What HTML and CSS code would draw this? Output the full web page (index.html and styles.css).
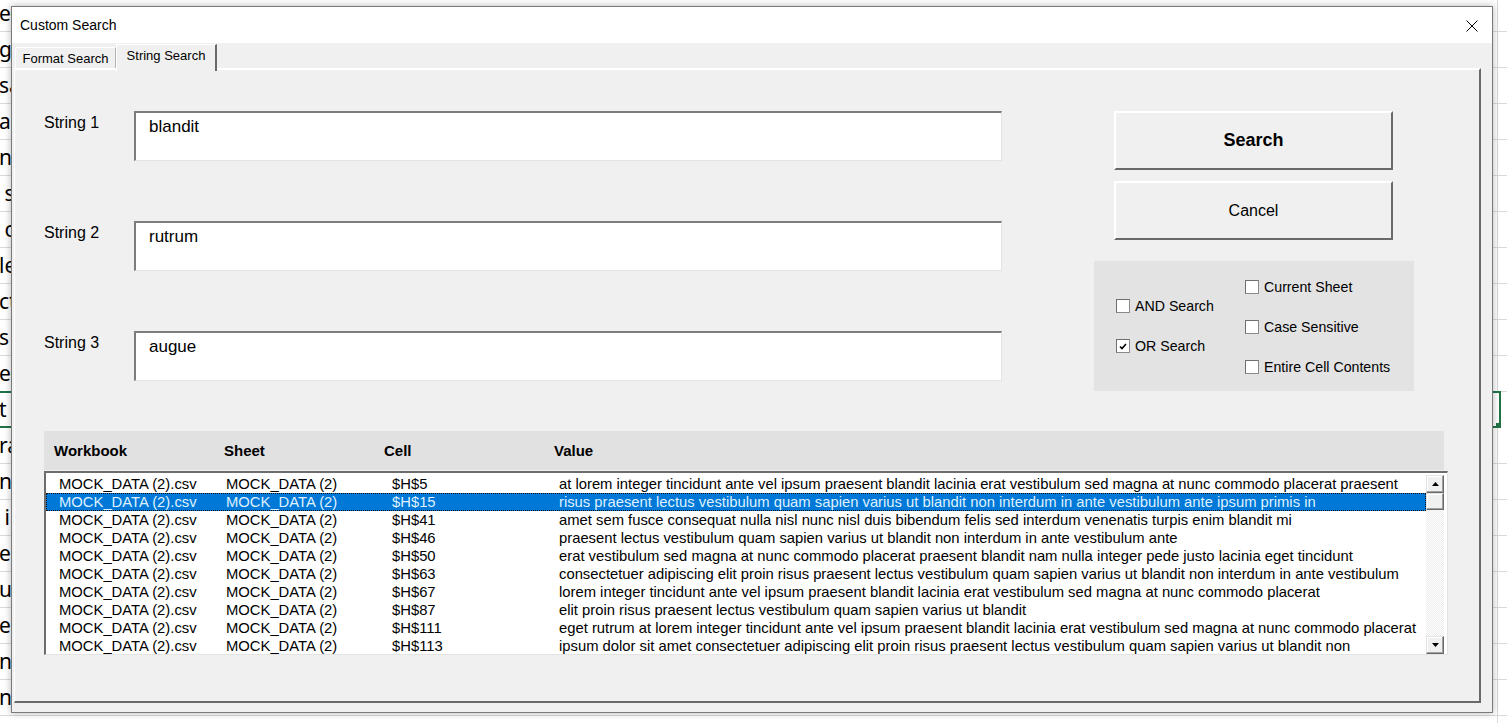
FILE: index.html
```html
<!DOCTYPE html>
<html lang="en">
<head>
    <meta charset="UTF-8">
    <title>Custom Search</title>
    <link rel="stylesheet" href="styles.css">
</head>
<body>
    <div class="sheet">
        <div class="row"><div class="cell"><span>e</span></div></div>
        <div class="row"><div class="cell"><span>ge</span></div></div>
        <div class="row"><div class="cell"><span>sa</span></div></div>
        <div class="row"><div class="cell"><span>a</span></div></div>
        <div class="row"><div class="cell"><span>nu</span></div></div>
        <div class="row"><div class="cell"><span>&nbsp;s</span></div></div>
        <div class="row"><div class="cell"><span>&nbsp;o</span></div></div>
        <div class="row"><div class="cell"><span>le</span></div></div>
        <div class="row"><div class="cell"><span>ct</span></div></div>
        <div class="row"><div class="cell"><span>s</span></div></div>
        <div class="row"><div class="cell"><span>er</span></div></div>
        <div class="row active"><div class="cell"><span>t</span></div></div>
        <div class="row"><div class="cell"><span>ra</span></div></div>
        <div class="row"><div class="cell"><span>n</span></div></div>
        <div class="row"><div class="cell"><span>&nbsp;i</span></div></div>
        <div class="row"><div class="cell"><span>e</span></div></div>
        <div class="row"><div class="cell"><span>u</span></div></div>
        <div class="row"><div class="cell"><span>e</span></div></div>
        <div class="row"><div class="cell"><span>n</span></div></div>
        <div class="row"><div class="cell"><span>n</span></div></div>
        <div class="row"><div class="cell"><span></span></div></div>
    </div>

    <div class="dialog">
        <div class="titlebar">
            <span class="title">Custom Search</span>
            <svg class="close" width="12" height="12" viewBox="0 0 12 12">
                <path d="M0.5 0.5 L11.5 11.5 M11.5 0.5 L0.5 11.5" stroke="#000" stroke-width="1"/>
            </svg>
        </div>

        <div class="tabs">
            <div class="tab">Format Search</div>
            <div class="tab on">String Search</div>
        </div>

        <div class="panel">
            <div class="top">
                <div class="strings">
                    <div class="field"><label>String 1</label><div class="textbox">blandit</div></div>
                    <div class="field"><label>String 2</label><div class="textbox">rutrum</div></div>
                    <div class="field"><label>String 3</label><div class="textbox">augue</div></div>
                </div>

                <div class="side">
                    <button class="btn main">Search</button>
                    <button class="btn">Cancel</button>
                    <div class="options">
                        <div class="optcol first">
                            <div class="check"><span class="box"></span>AND Search</div>
                            <div class="check"><span class="box"><svg width="8" height="7" viewBox="0 0 8 7"><path d="M1 3.5 L3 5.5 L7 1" fill="none" stroke="#000" stroke-width="1.6"/></svg></span>OR Search</div>
                        </div>
                        <div class="optcol second">
                            <div class="check"><span class="box"></span>Current Sheet</div>
                            <div class="check"><span class="box"></span>Case Sensitive</div>
                            <div class="check"><span class="box"></span>Entire Cell Contents</div>
                        </div>
                    </div>
                </div>
            </div>

            <div class="results">
                <div class="head">
                    <span class="c1">Workbook</span><span class="c2">Sheet</span><span class="c3">Cell</span><span class="c4">Value</span>
                </div>
                <div class="listbox">
                    <div class="items">
                        <div class="item"><span class="c1">MOCK_DATA (2).csv</span><span class="c2">MOCK_DATA (2)</span><span class="c3">$H$5</span><span class="c4">at lorem integer tincidunt ante vel ipsum praesent blandit lacinia erat vestibulum sed magna at nunc commodo placerat praesent</span></div>
                        <div class="item sel"><span class="c1">MOCK_DATA (2).csv</span><span class="c2">MOCK_DATA (2)</span><span class="c3">$H$15</span><span class="c4">risus praesent lectus vestibulum quam sapien varius ut blandit non interdum in ante vestibulum ante ipsum primis in</span></div>
                        <div class="item"><span class="c1">MOCK_DATA (2).csv</span><span class="c2">MOCK_DATA (2)</span><span class="c3">$H$41</span><span class="c4">amet sem fusce consequat nulla nisl nunc nisl duis bibendum felis sed interdum venenatis turpis enim blandit mi</span></div>
                        <div class="item"><span class="c1">MOCK_DATA (2).csv</span><span class="c2">MOCK_DATA (2)</span><span class="c3">$H$46</span><span class="c4">praesent lectus vestibulum quam sapien varius ut blandit non interdum in ante vestibulum ante</span></div>
                        <div class="item"><span class="c1">MOCK_DATA (2).csv</span><span class="c2">MOCK_DATA (2)</span><span class="c3">$H$50</span><span class="c4">erat vestibulum sed magna at nunc commodo placerat praesent blandit nam nulla integer pede justo lacinia eget tincidunt</span></div>
                        <div class="item"><span class="c1">MOCK_DATA (2).csv</span><span class="c2">MOCK_DATA (2)</span><span class="c3">$H$63</span><span class="c4">consectetuer adipiscing elit proin risus praesent lectus vestibulum quam sapien varius ut blandit non interdum in ante vestibulum</span></div>
                        <div class="item"><span class="c1">MOCK_DATA (2).csv</span><span class="c2">MOCK_DATA (2)</span><span class="c3">$H$67</span><span class="c4">lorem integer tincidunt ante vel ipsum praesent blandit lacinia erat vestibulum sed magna at nunc commodo placerat</span></div>
                        <div class="item"><span class="c1">MOCK_DATA (2).csv</span><span class="c2">MOCK_DATA (2)</span><span class="c3">$H$87</span><span class="c4">elit proin risus praesent lectus vestibulum quam sapien varius ut blandit</span></div>
                        <div class="item"><span class="c1">MOCK_DATA (2).csv</span><span class="c2">MOCK_DATA (2)</span><span class="c3">$H$111</span><span class="c4">eget rutrum at lorem integer tincidunt ante vel ipsum praesent blandit lacinia erat vestibulum sed magna at nunc commodo placerat</span></div>
                        <div class="item"><span class="c1">MOCK_DATA (2).csv</span><span class="c2">MOCK_DATA (2)</span><span class="c3">$H$113</span><span class="c4">ipsum dolor sit amet consectetuer adipiscing elit proin risus praesent lectus vestibulum quam sapien varius ut blandit non</span></div>
                    </div>
                    <div class="scroll">
                        <div class="arrow"><svg width="7" height="4" viewBox="0 0 7 4"><path d="M3.5 0 L7 4 L0 4 Z" fill="#000"/></svg></div>
                        <div class="thumb"></div>
                        <div class="track"></div>
                        <div class="arrow"><svg width="7" height="4" viewBox="0 0 7 4"><path d="M0 0 L7 0 L3.5 4 Z" fill="#000"/></svg></div>
                    </div>
                </div>
            </div>
        </div>
    </div>
</body>
</html>
```

FILE: styles.css
```css
html, body { margin: 0; padding: 0; }
body { width: 1507px; height: 723px; overflow: hidden; background: #fff; position: relative; font-family: "Liberation Sans", Arial, sans-serif; color: #000; }

/* spreadsheet behind the dialog */
.sheet { margin-top: -4px; }
.row { height: 36px; box-sizing: border-box; border-bottom: 1px solid #d9d9d9; display: flex; }
.cell { width: 1498px; box-sizing: border-box; border-right: 1px solid #d9d9d9; display: flex; overflow: hidden; font-family: "Noto Sans", sans-serif; font-size: 21px; line-height: 35px; }
.cell span { margin-left: -1px; white-space: pre; }
.row.active { border-bottom: none; }
.row.active .cell { position: relative; border: 2px solid #217346; border-left: none; width: 1501px; margin-top: -1px; height: 37px; line-height: 33px; }
.row.active .cell::after { content: ""; position: absolute; right: -4px; bottom: -4px; width: 6px; height: 6px; background: #217346; border: 1px solid #fff; }

/* dialog window */
.dialog { position: absolute; left: 11px; top: 6px; width: 1482px; height: 707px; box-sizing: border-box; border: 1px solid #7a7a7a; background: #f0f0f0; box-shadow: 0 0 7px rgba(0, 0, 0, 0.3); display: flex; flex-direction: column; }
.titlebar { height: 36px; background: #fff; display: flex; align-items: center; padding: 0 14px 0 8px; }
.title { font-size: 14px; flex: 1; }
.close { display: block; margin-top: 1px; }

.tabs { height: 25px; display: flex; align-items: flex-start; padding-left: 3px; font-size: 13px; }
.tab { width: 101px; height: 21px; margin-top: 4px; box-sizing: border-box; border-top: 1px solid #fff; border-left: 1px solid #fff; border-right: 1px solid #b4b4b4; display: flex; align-items: center; justify-content: center; }
.tab.on { height: 27px; margin-top: 1px; border-right: 2px solid #696969; padding-bottom: 5px; position: relative; z-index: 1; background: #f0f0f0; }

.panel { height: 635px; margin: 0 11px 0 2px; box-sizing: border-box; border-top: 2px solid #fff; border-left: 1px solid #fff; border-right: 2px solid #696969; border-bottom: 2px solid #696969; }

.top { display: flex; padding: 41px 0 0 29px; }
.strings { width: 958px; }
.field { display: flex; margin-bottom: 60px; }
.field:last-child { margin-bottom: 0; }
.field label { width: 90px; font-size: 16px; line-height: 20px; margin-top: 2px; }
.textbox { width: 868px; height: 50px; box-sizing: border-box; background: #fff; border-style: solid; border-width: 2px 1px 1px 2px; border-color: #7c7c7c #e3e3e3 #e3e3e3 #7c7c7c; padding: 4px 13px; font-size: 17px; line-height: 20px; }

.side { width: 320px; margin-left: 92px; }
.btn { display: block; width: 279px; height: 59px; margin: 0 0 11px 20px; box-sizing: border-box; background: #f0f0f0; border-style: solid; border-width: 2px; border-color: #fff #696969 #696969 #fff; font-family: "Liberation Sans", Arial, sans-serif; font-size: 16px; color: #000; padding: 0; }
.btn.main { font-size: 18px; font-weight: bold; }

.options { margin-top: 21px; height: 130px; background: #e3e3e3; display: flex; font-size: 14.2px; }
.optcol { display: flex; flex-direction: column; gap: 20px; }
.optcol.first { margin-left: 22px; padding-top: 35px; width: 129px; }
.optcol.second { padding-top: 16px; }
.check { height: 20px; display: flex; align-items: center; gap: 5px; }
.box { width: 14px; height: 14px; box-sizing: border-box; background: #fff; border: 1px solid #8a8a8a; border-top-color: #6e6e6e; border-left-color: #6e6e6e; display: flex; align-items: center; justify-content: center; }
.box svg { display: block; }

/* results list */
.results { margin: 40px 0 0 29px; }
.head { width: 1400px; height: 39px; background: #e1e1e1; display: flex; font-size: 15px; font-weight: bold; line-height: 39px; padding-left: 10px; box-sizing: border-box; }
.head .c1 { width: 170px; }
.head .c2 { width: 160px; }
.head .c3 { width: 170px; }

.listbox { width: 1404px; height: 184px; margin-top: 1px; box-sizing: border-box; background: #fff; border-style: solid; border-width: 2px 1px 1px 2px; border-color: #6d6d6d #e3e3e3 #e3e3e3 #6d6d6d; padding: 2px 3px 0 0; display: flex; overflow: hidden; }
.items { flex: 1; font-size: 14.8px; }
.item { height: 18px; line-height: 18px; display: flex; padding-left: 13px; white-space: nowrap; overflow: hidden; }
.item .c1 { width: 167px; flex: none; }
.item .c2 { width: 166px; flex: none; }
.item .c3 { width: 167px; flex: none; }
.item .c4 { flex: 1; overflow: hidden; }
.item.sel { background: #0078d7; color: #dff1ff; outline: 1px dotted #111; outline-offset: -1px; }

.scroll { width: 18px; height: 179px; display: flex; flex-direction: column; }
.arrow, .thumb { height: 18px; flex: none; box-sizing: border-box; background: #f0f0f0; border-style: solid; border-width: 1px; border-color: #e3e3e3 #696969 #696969 #e3e3e3; box-shadow: inset -1px -1px #a0a0a0, inset 1px 1px #fff; display: flex; align-items: center; justify-content: center; }
.thumb { height: 17px; }
.track { flex: 1; background-color: #fff; background-image: repeating-conic-gradient(#ececec 0 25%, #fff 0 50%); background-size: 2px 2px; }
```
